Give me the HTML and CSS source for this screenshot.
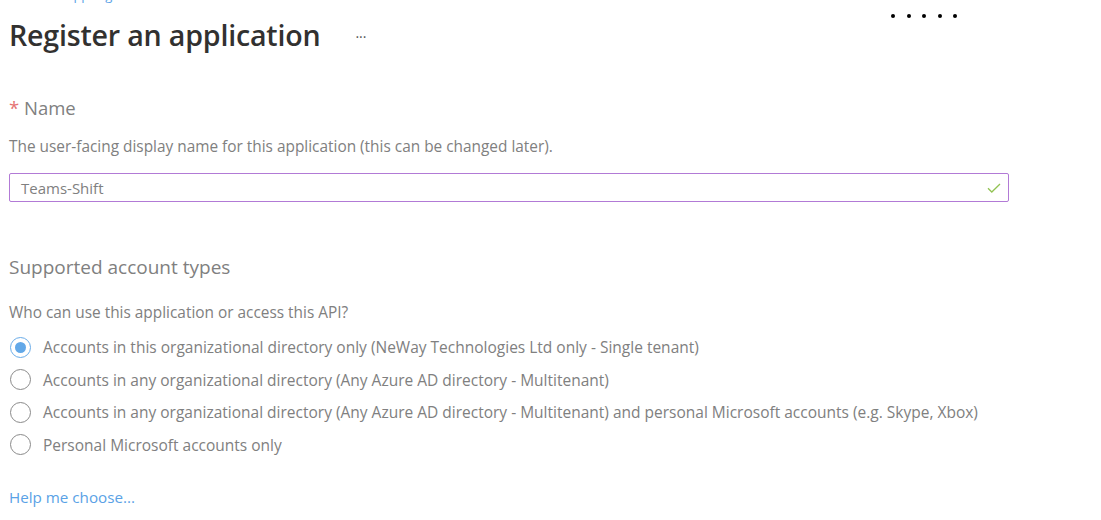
FILE: index.html
```html
<!DOCTYPE html>
<html lang="en">
<head>
<meta charset="utf-8">
<title>Register an application</title>
<link rel="stylesheet" href="styles.css">
</head>
<body>
<div class="page">
  <nav class="crumbs"><span class="crumb-home">Home</span><span class="sep">&gt;</span><a class="crumb-link">App registrations</a><span class="sep">&gt;</span></nav>
  <div class="title-row">
    <h1 class="title">Register an application</h1>
    <span class="more">···</span>
  </div>

  <section class="field">
    <div class="label"><span class="req">*</span> Name</div>
    <p class="desc">The user-facing display name for this application (this can be changed later).</p>
    <div class="input">
      <span class="input-text">Teams-Shift</span>
      <svg class="check" width="14" height="10" viewBox="0 0 14 10"><path d="M1 5.2 L4.8 9 L13 1" fill="none" stroke="#92c353" stroke-width="1.3"/></svg>
    </div>
  </section>

  <section class="field accounts">
    <div class="label">Supported account types</div>
    <p class="desc">Who can use this application or access this API?</p>
    <ul class="radios">
      <li class="radio checked"><span class="dot"></span>Accounts in this organizational directory only (NeWay Technologies Ltd only - Single tenant)</li>
      <li class="radio"><span class="dot"></span>Accounts in any organizational directory (Any Azure AD directory - Multitenant)</li>
      <li class="radio"><span class="dot"></span>Accounts in any organizational directory (Any Azure AD directory - Multitenant) and personal Microsoft accounts (e.g. Skype, Xbox)</li>
      <li class="radio"><span class="dot"></span>Personal Microsoft accounts only</li>
    </ul>
    <a class="help">Help me choose...</a>
  </section>
</div>
<div class="loader"><i></i><i></i><i></i><i></i><i></i></div>
</body>
</html>
```
FILE: styles.css
```css
html, body {
  margin: 0;
  padding: 0;
  background: #fff;
}
body {
  font-family: "Open Sans", "Noto Sans", sans-serif;
  color: #7a7a7a;
  overflow: hidden;
}
.page {
  padding-left: 9px;
  width: 1000px;
}
.crumbs {
  font-size: 13px;
  line-height: 16px;
  margin-top: -13px;
  height: 16px;
  color: #8a8886;
}
.crumb-link {
  color: #5aa2e6;
  margin: 0 6px;
}
.sep { margin-left: 6px; }
.title-row {
  display: flex;
  align-items: center;
  margin-top: 11px;
  height: 40px;
}
.title {
  margin: 0;
  font-size: 28.6px;
  font-weight: 600;
  color: #323130;
  letter-spacing: -0.2px;
}
.more {
  margin-left: 35px;
  font-size: 14px;
  color: #555;
  margin-top: 4px;
}
.field {
  margin-top: 42px;
}
.label {
  font-size: 18.5px;
  line-height: 24px;
  color: #808080;
}
.accounts .label {
  font-size: 19px;
}
.req {
  color: #e57373;
}
.desc {
  margin: 17px 0 0;
  font-size: 15.4px;
  line-height: 20px;
  color: #808080;
}
.input {
  margin-top: 16px;
  height: 29px;
  box-sizing: border-box;
  border: 1px solid #b27ad6;
  border-radius: 2px;
  display: flex;
  align-items: center;
  justify-content: space-between;
  padding: 0 7px 0 11px;
}
.input-text {
  font-size: 15px;
  color: #808080;
}
.accounts {
  margin-top: 53px;
}
.accounts .desc {
  margin-top: 24px;
}
.radios {
  list-style: none;
  margin: 8px 0 0;
  padding: 0;
}
.radio {
  display: flex;
  align-items: center;
  height: 32.5px;
  font-size: 15.5px;
  color: #808080;
}
.dot {
  width: 21px;
  height: 21px;
  box-sizing: border-box;
  border: 1px solid #8a8a8a;
  border-radius: 50%;
  margin: 0 12px 0 1px;
  display: inline-flex;
  align-items: center;
  justify-content: center;
  flex: none;
}
.checked .dot {
  border-color: #6aace8;
}
.checked .dot::after {
  content: "";
  width: 11px;
  height: 11px;
  border-radius: 50%;
  background: #62a8e8;
}
.help {
  display: block;
  margin-top: 26px;
  font-size: 15.2px;
  line-height: 20px;
  color: #5aa2e6;
}
.loader {
  position: absolute;
  left: 891px;
  top: 14px;
  display: flex;
  gap: 11.5px;
}
.loader i {
  width: 4px;
  height: 4px;
  border-radius: 50%;
  background: #000;
}
```
